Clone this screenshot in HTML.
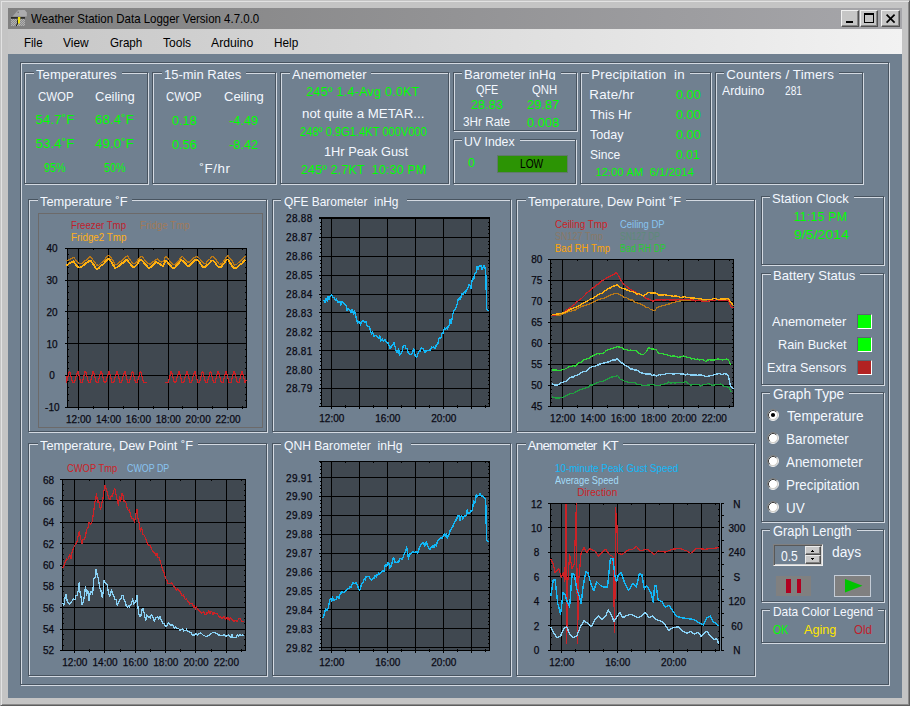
<!DOCTYPE html>
<html lang="en"><head><meta charset="utf-8"><title>Weather Station Data Logger Version 4.7.0.0</title>
<style>
html,body{margin:0;padding:0}
body{width:910px;height:706px;overflow:hidden;position:relative;background:#c4c4c4;font-family:"Liberation Sans", sans-serif;}
#win{position:absolute;left:0;top:0;width:910px;height:706px;box-sizing:border-box;border:1px solid #c4c4c4;border-right-color:#5e5e5e;border-bottom-color:#5e5e5e;box-shadow:inset 1px 1px 0 #e2e2e2, inset -1px -1px 0 #8a8a8a;background:#c4c4c4}
.gb{position:absolute;border:1px solid #485460;box-shadow:1px 1px 0 0 #d4dae2, inset 1px 1px 0 0 #d4dae2}
.gap{position:absolute;background:#708090}
.t{position:absolute;white-space:pre;line-height:1;transform-origin:0 50%}
.cb{position:absolute;width:18px;height:17px;box-sizing:border-box;background:#c6c6c6;border:1px solid #f0f0f0;border-right-color:#505050;border-bottom-color:#505050;box-shadow:inset -1px -1px 0 #868686}
.sq{position:absolute;width:15px;height:15px;box-sizing:border-box;border:1px solid #5a6672;border-right-color:#fff;border-bottom-color:#fff}
.rb{position:absolute;width:12px;height:12px;box-sizing:border-box;border-radius:50%;background:#fff;border:1px solid #606a74;border-right-color:#e8ecf0;border-bottom-color:#e8ecf0;box-shadow:inset 1px 1px 0 #30363c}
.rb i{position:absolute;left:3px;top:3px;width:4px;height:4px;border-radius:50%;background:#000}
.spin{position:absolute;box-sizing:border-box;border:1px solid #808080;border-right-color:#f0f0f0;border-bottom-color:#f0f0f0;box-shadow:inset 1px 1px 0 #585858, inset -1px -1px 0 #d0d0d0}
.sb{position:absolute;width:16px;height:9px;box-sizing:border-box;background:#c8c8c8;border:1px solid #ececec;border-right-color:#505050;border-bottom-color:#505050;box-shadow:inset -1px -1px 0 #808080}
</style></head>
<body>
<div id="win"></div>
<div style="position:absolute;left:8px;top:8px;width:894px;height:21px;background:linear-gradient(90deg,#808080,#a6a6aa);"></div>
<div style="position:absolute;left:8px;top:29px;width:894px;height:25px;background:linear-gradient(90deg,#c6c6c6,#f2f2f2);"></div>
<div style="position:absolute;left:8px;top:54px;width:894px;height:644px;background:#708090;"></div>
<svg style="position:absolute;left:0;top:0" width="40" height="32" viewBox="0 0 40 32">
<path d="M12.5 16.6 L17.6 10.4 L24.6 10 L26.6 12.5 L26.6 16.6 Z" fill="#a4a4a6"/>
<path d="M18 10.3 L24.6 10 L26.6 12.5 L26.6 16.2 L20 16.2 Z" fill="#acacae"/>
<defs><pattern id="dth" width="2" height="2" patternUnits="userSpaceOnUse"><rect width="2" height="2" fill="#8c8c8c"/><rect width="1" height="1" fill="#b0b0b0"/><rect x="1" y="1" width="1" height="1" fill="#b0b0b0"/></pattern></defs><rect x="11" y="19" width="14" height="7" fill="url(#dth)"/>
<rect x="11" y="17" width="14" height="1.7" fill="#2c2c2c"/>
<path d="M18 17 L20.4 17 L19.8 23.4 L17.7 23.4 Z" fill="#f4e610"/>
<path d="M17.2 19.6 L18 19.6 L17.9 24 L16.4 26.2 L15.6 26 L17 23.6 Z" fill="#181818"/>
<rect x="17.6" y="11.6" width="1.2" height="1.4" fill="#707070"/>
</svg>
<div class="cb" style="left:841px;top:10px"></div>
<div style="position:absolute;left:846px;top:21px;width:7px;height:2px;background:#000;"></div>
<div class="cb" style="left:860px;top:10px"></div>
<div style="position:absolute;left:864px;top:13px;width:8px;height:7px;border:1px solid #000;border-top:2px solid #000"></div>
<div class="cb" style="left:881px;top:10px;width:19px"></div>
<svg style="position:absolute;left:881px;top:10px" width="19" height="17"><path d="M5.6 4.6 L13.6 12.6 M13.6 4.6 L5.6 12.6" stroke="#000" stroke-width="1.7"/></svg>
<div class="gb" style="left:20px;top:62px;width:867px;height:621px"></div>
<div class="gb" style="left:24px;top:72px;width:122px;height:110px"></div>
<div class="gap" style="left:34.4px;top:72px;width:87.6px;height:2px"></div>
<div class="gb" style="left:152px;top:72px;width:122px;height:110px"></div>
<div class="gap" style="left:161.8px;top:72px;width:84.19999999999999px;height:2px"></div>
<div class="gb" style="left:280px;top:72px;width:167px;height:110px"></div>
<div class="gap" style="left:289.5px;top:72px;width:81.5px;height:2px"></div>
<div class="gb" style="left:453px;top:72px;width:122px;height:57px"></div>
<div class="gap" style="left:462.2px;top:72px;width:98.80000000000001px;height:2px"></div>
<div class="gb" style="left:453px;top:139px;width:121px;height:43px"></div>
<div class="gap" style="left:462.2px;top:139px;width:57.599999999999966px;height:2px"></div>
<div style="position:absolute;left:497px;top:155px;width:71px;height:18px;background:#2c9404;box-sizing:border-box;border:1px solid #5f7a6a"></div>
<div class="gb" style="left:580px;top:72px;width:129px;height:110px"></div>
<div class="gap" style="left:589.3px;top:72px;width:100.39999999999998px;height:2px"></div>
<div class="gb" style="left:715px;top:72px;width:146px;height:110px"></div>
<div class="gap" style="left:724.3px;top:72px;width:114.70000000000005px;height:2px"></div>
<div class="gb" style="left:761px;top:196px;width:121px;height:67px"></div>
<div class="gap" style="left:770.3px;top:196px;width:83.70000000000005px;height:2px"></div>
<div class="gb" style="left:761px;top:273px;width:121px;height:110px"></div>
<div class="gap" style="left:770.5px;top:273px;width:89.29999999999995px;height:2px"></div>
<div class="sq" style="left:857px;top:314px;background:#00ff00"></div>
<div class="sq" style="left:857px;top:337px;background:#00ff00"></div>
<div class="sq" style="left:857px;top:360px;background:#b22222"></div>
<div class="gb" style="left:761px;top:392px;width:121px;height:128px"></div>
<div class="gap" style="left:770px;top:392px;width:79px;height:2px"></div>
<svg style="position:absolute;left:765.2px;top:406.7px" width="16" height="16" viewBox="-8 -8 16 16"><circle r="5" fill="#fff"/><path d="M-3.89 3.89 A5.5 5.5 0 0 1 3.89 -3.89" stroke="#808080" stroke-width="1" fill="none"/><path d="M-3.89 3.89 A5.5 5.5 0 0 0 3.89 -3.89" stroke="#f4f4f4" stroke-width="1" fill="none"/><path d="M-3.18 3.18 A4.5 4.5 0 0 1 3.18 -3.18" stroke="#404040" stroke-width="1" fill="none"/><path d="M-3.18 3.18 A4.5 4.5 0 0 0 3.18 -3.18" stroke="#d4d0c8" stroke-width="1" fill="none"/><circle r="2.1" fill="#000"/></svg>
<svg style="position:absolute;left:765.2px;top:429.7px" width="16" height="16" viewBox="-8 -8 16 16"><circle r="5" fill="#fff"/><path d="M-3.89 3.89 A5.5 5.5 0 0 1 3.89 -3.89" stroke="#808080" stroke-width="1" fill="none"/><path d="M-3.89 3.89 A5.5 5.5 0 0 0 3.89 -3.89" stroke="#f4f4f4" stroke-width="1" fill="none"/><path d="M-3.18 3.18 A4.5 4.5 0 0 1 3.18 -3.18" stroke="#404040" stroke-width="1" fill="none"/><path d="M-3.18 3.18 A4.5 4.5 0 0 0 3.18 -3.18" stroke="#d4d0c8" stroke-width="1" fill="none"/></svg>
<svg style="position:absolute;left:765.2px;top:452.7px" width="16" height="16" viewBox="-8 -8 16 16"><circle r="5" fill="#fff"/><path d="M-3.89 3.89 A5.5 5.5 0 0 1 3.89 -3.89" stroke="#808080" stroke-width="1" fill="none"/><path d="M-3.89 3.89 A5.5 5.5 0 0 0 3.89 -3.89" stroke="#f4f4f4" stroke-width="1" fill="none"/><path d="M-3.18 3.18 A4.5 4.5 0 0 1 3.18 -3.18" stroke="#404040" stroke-width="1" fill="none"/><path d="M-3.18 3.18 A4.5 4.5 0 0 0 3.18 -3.18" stroke="#d4d0c8" stroke-width="1" fill="none"/></svg>
<svg style="position:absolute;left:765.2px;top:475.7px" width="16" height="16" viewBox="-8 -8 16 16"><circle r="5" fill="#fff"/><path d="M-3.89 3.89 A5.5 5.5 0 0 1 3.89 -3.89" stroke="#808080" stroke-width="1" fill="none"/><path d="M-3.89 3.89 A5.5 5.5 0 0 0 3.89 -3.89" stroke="#f4f4f4" stroke-width="1" fill="none"/><path d="M-3.18 3.18 A4.5 4.5 0 0 1 3.18 -3.18" stroke="#404040" stroke-width="1" fill="none"/><path d="M-3.18 3.18 A4.5 4.5 0 0 0 3.18 -3.18" stroke="#d4d0c8" stroke-width="1" fill="none"/></svg>
<svg style="position:absolute;left:765.2px;top:498.7px" width="16" height="16" viewBox="-8 -8 16 16"><circle r="5" fill="#fff"/><path d="M-3.89 3.89 A5.5 5.5 0 0 1 3.89 -3.89" stroke="#808080" stroke-width="1" fill="none"/><path d="M-3.89 3.89 A5.5 5.5 0 0 0 3.89 -3.89" stroke="#f4f4f4" stroke-width="1" fill="none"/><path d="M-3.18 3.18 A4.5 4.5 0 0 1 3.18 -3.18" stroke="#404040" stroke-width="1" fill="none"/><path d="M-3.18 3.18 A4.5 4.5 0 0 0 3.18 -3.18" stroke="#d4d0c8" stroke-width="1" fill="none"/></svg>
<div class="gb" style="left:761px;top:529px;width:121px;height:71px"></div>
<div class="gap" style="left:770px;top:529px;width:86.5px;height:2px"></div>
<div class="spin" style="left:773px;top:544px;width:50px;height:22px"></div>
<div class="sb" style="left:805px;top:546px"></div><div class="sb" style="left:805px;top:555px"></div>
<div style="position:absolute;left:812px;top:550px;width:1px;height:1px;background:#000;"></div>
<div style="position:absolute;left:811px;top:551px;width:3px;height:1px;background:#000;"></div>
<div style="position:absolute;left:811px;top:558px;width:3px;height:1px;background:#000;"></div>
<div style="position:absolute;left:812px;top:559px;width:1px;height:1px;background:#000;"></div>
<div style="position:absolute;left:776px;top:576px;width:35px;height:20px;background:#808080;"></div>
<div style="position:absolute;left:786px;top:579px;width:4.5px;height:14px;background:#b00020;"></div>
<div style="position:absolute;left:796.7px;top:579px;width:4.5px;height:14px;background:#b00020;"></div>
<div style="position:absolute;left:834px;top:575px;width:37px;height:22px;background:#808080;box-sizing:border-box;border:1px solid #c4ccd6"></div>
<svg style="position:absolute;left:834px;top:575px" width="37" height="22"><path d="M11 4 L28.5 10.8 L11 17.6 Z" fill="#00c400"/></svg>
<div class="gb" style="left:761px;top:609px;width:122px;height:32px"></div>
<div class="gap" style="left:770px;top:609px;width:108px;height:2px"></div>
<div class="gb" style="left:28px;top:199px;width:237px;height:231px"></div>
<div class="gap" style="left:37.5px;top:199px;width:94.5px;height:2px"></div>
<div style="position:absolute;left:38px;top:213px;width:223px;height:213px;border:1px solid #6c6a6a"></div>
<div class="gb" style="left:272px;top:199px;width:237px;height:231px"></div>
<div class="gap" style="left:281px;top:199px;width:126px;height:2px"></div>
<div class="gb" style="left:516px;top:199px;width:237px;height:231px"></div>
<div class="gap" style="left:525.8px;top:199px;width:160.0px;height:2px"></div>
<div class="gb" style="left:28px;top:443px;width:237px;height:231px"></div>
<div class="gap" style="left:38.2px;top:443px;width:160.0px;height:2px"></div>
<div class="gb" style="left:272px;top:443px;width:237px;height:231px"></div>
<div class="gap" style="left:281px;top:443px;width:130px;height:2px"></div>
<div class="gb" style="left:516px;top:443px;width:237px;height:231px"></div>
<div class="gap" style="left:525.6px;top:443px;width:97.39999999999998px;height:2px"></div>
<svg style="position:absolute;left:0;top:0" width="910" height="706" viewBox="0 0 910 706">
<rect x="67" y="248" width="180" height="160" fill="#404850"/>
<path d="M78.5 248 V410 M108.5 248 V410 M138.5 248 V410 M168.5 248 V410 M197.5 248 V410 M227.5 248 V410 M65 280.5 H247 M65 311.5 H247 M65 343.5 H247 M65 375.5 H247 M67.5 248 V408 M65 248.5 H247 M65 407.5 H247 M78.5 406 V409 M78.5 249 V250 M93.5 406 V409 M93.5 249 V250 M108.5 406 V409 M108.5 249 V250 M123.5 406 V409 M123.5 249 V250 M138.5 406 V409 M138.5 249 V250 M153.5 406 V409 M153.5 249 V250 M168.5 406 V409 M168.5 249 V250 M182.5 406 V409 M182.5 249 V250 M197.5 406 V409 M197.5 249 V250 M212.5 406 V409 M212.5 249 V250 M227.5 406 V409 M227.5 249 V250 M242.5 406 V409 M242.5 249 V250 M68 248.5 H69 M68 254.5 H69 M68 261.5 H69 M68 267.5 H69 M68 273.5 H69 M68 280.5 H69 M68 286.5 H69 M68 292.5 H69 M68 299.5 H69 M68 305.5 H69 M68 311.5 H69 M68 318.5 H69 M68 324.5 H69 M68 330.5 H69 M68 337.5 H69 M68 343.5 H69 M68 349.5 H69 M68 356.5 H69 M68 362.5 H69 M68 368.5 H69 M68 375.5 H69 M68 381.5 H69 M68 387.5 H69 M68 394.5 H69 M68 400.5 H69 M246.5 248 V408 M245 248.5 H246 M245 254.5 H246 M245 261.5 H246 M245 267.5 H246 M245 273.5 H246 M245 280.5 H246 M245 286.5 H246 M245 292.5 H246 M245 299.5 H246 M245 305.5 H246 M245 311.5 H246 M245 318.5 H246 M245 324.5 H246 M245 330.5 H246 M245 337.5 H246 M245 343.5 H246 M245 349.5 H246 M245 356.5 H246 M245 362.5 H246 M245 368.5 H246 M245 375.5 H246 M245 381.5 H246 M245 387.5 H246 M245 394.5 H246 M245 400.5 H246" stroke="#000" stroke-width="1" fill="none" shape-rendering="crispEdges"/>
<polyline points="66.5,261.0 68.6,260.2 70.6,258.9 72.7,257.7 73.9,257.4 76.4,261.1 78.9,263.9 80.9,263.6 83.1,262.5 85.3,260.7 87.6,259.2 89.8,257.0 91.0,257.1 93.8,261.2 96.7,264.9 98.7,265.4 101.1,262.9 103.5,261.1 106.0,257.9 108.4,255.3 109.6,255.6 112.4,259.8 115.3,264.6 117.3,264.0 119.5,262.3 121.8,260.7 124.0,258.7 126.2,256.6 127.4,256.0 130.3,260.1 133.2,263.5 135.2,263.6 137.9,260.0 140.5,257.0 141.7,256.4 144.1,259.1 146.5,261.9 148.9,263.9 150.9,264.0 153.5,261.4 156.1,259.8 157.3,258.9 159.3,260.6 161.3,262.1 163.3,261.6 165.5,256.7 166.7,257.3 168.7,259.5 170.8,262.5 172.8,264.4 174.8,264.5 177.0,262.6 179.1,260.2 181.3,256.7 182.5,256.5 185.2,259.4 187.8,262.2 189.8,261.8 191.9,260.0 194.1,257.8 196.2,256.5 197.4,256.5 199.5,258.5 201.5,260.7 203.6,263.4 205.6,263.8 207.8,260.7 209.9,259.1 212.1,256.6 213.3,256.7 215.3,259.0 217.4,261.6 219.4,264.5 221.4,263.9 224.2,260.5 227.0,256.3 228.2,255.9 230.2,259.2 232.3,261.1 234.3,264.9 236.3,264.8 238.5,262.4 240.6,261.1 242.8,258.9 244.9,256.3 246.1,257.0" fill="none" stroke="#b87818" stroke-width="1.3" stroke-linejoin="round" shape-rendering="crispEdges"/>
<polyline points="66.5,265.7 69.4,263.1 72.4,261.7 73.6,261.4 76.1,264.9 78.6,267.5 80.6,267.6 82.8,265.8 85.0,264.0 87.3,262.3 89.5,260.7 90.7,260.6 93.6,264.6 96.4,269.1 98.4,268.6 100.8,265.6 103.2,264.3 105.7,261.3 108.1,258.8 109.3,258.9 112.2,263.4 115.0,267.9 117.0,267.4 119.2,265.9 121.4,263.5 123.7,262.5 125.9,259.8 127.1,259.9 130.0,263.6 132.9,267.2 134.9,266.8 137.6,263.7 140.2,259.4 141.4,259.9 143.8,262.5 146.2,265.1 148.6,268.3 150.6,267.4 153.2,265.1 155.8,262.0 157.0,262.5 159.0,263.5 161.0,265.0 163.0,266.0 165.2,261.0 166.4,260.6 168.4,263.2 170.5,265.4 172.5,268.1 174.5,268.4 176.7,265.1 178.8,263.3 181.0,260.2 182.2,260.6 184.8,262.7 187.5,266.0 189.5,265.6 191.6,263.3 193.8,261.1 195.9,259.6 197.1,259.6 199.2,261.9 201.2,264.8 203.3,267.6 205.3,267.0 207.5,264.7 209.6,262.9 211.8,260.4 213.0,260.5 215.0,262.6 217.1,265.6 219.1,267.5 221.1,267.0 223.9,263.6 226.7,259.7 227.9,259.4 229.9,262.6 232.0,265.8 234.0,267.8 236.0,268.2 238.2,266.3 240.3,264.5 242.5,262.9 244.6,260.4 245.8,260.6" fill="none" stroke="#ffb010" stroke-width="1.8" stroke-linejoin="round" shape-rendering="crispEdges"/>
<polyline points="66.6,376.5 66.4,382.5 69.3,371.6 69.9,371.6 72.6,382.5 74.5,382.5 77.4,371.6 78.0,371.6 80.7,382.5 82.2,382.5 85.1,371.6 85.7,371.6 88.4,382.5 90.1,382.5 93.0,371.6 93.6,371.6 96.3,382.5 98.0,382.5 100.9,371.6 101.5,371.6 104.2,382.5 105.8,382.5 108.7,371.6 109.3,371.6 112.0,382.5 113.8,382.5 116.7,371.6 117.3,371.6 120.0,382.5 121.5,382.5 124.4,371.6 125.0,371.6 127.7,382.5 129.3,382.5 132.2,371.6 132.8,371.6 135.5,382.5 137.3,382.5 140.2,371.6 140.8,371.6 143.5,382.5 147.0,382.5" fill="none" stroke="#cc2226" stroke-width="1.2" stroke-linejoin="round" shape-rendering="crispEdges"/>
<polyline points="165.0,382.5 168.1,382.5 171.0,371.6 171.6,371.6 174.3,382.5 175.8,382.5 178.7,371.6 179.3,371.6 182.0,382.5 183.8,382.5 186.7,371.6 187.3,371.6 190.0,382.5 191.5,382.5 194.4,371.6 195.0,371.6 197.7,382.5 199.4,382.5 202.3,371.6 202.9,371.6 205.6,382.5 207.3,382.5 210.2,371.6 210.8,371.6 213.5,382.5 215.0,382.5 217.9,371.6 218.5,371.6 221.2,382.5 222.9,382.5 225.8,371.6 226.4,371.6 229.1,382.5 231.0,382.5 233.9,371.6 234.5,371.6 237.2,382.5 238.9,382.5 241.8,371.6 242.4,371.6 245.1,382.5 246.3,380.0" fill="none" stroke="#cc2226" stroke-width="1.2" stroke-linejoin="round" shape-rendering="crispEdges"/>
<rect x="321" y="217" width="169" height="190" fill="#404850"/>
<path d="M331.5 217 V409 M359.5 217 V409 M387.5 217 V409 M415.5 217 V409 M443.5 217 V409 M471.5 217 V409 M319 218.5 H490 M319 237.5 H490 M319 256.5 H490 M319 275.5 H490 M319 294.5 H490 M319 312.5 H490 M319 331.5 H490 M319 350.5 H490 M319 369.5 H490 M319 388.5 H490 M321.5 217 V407 M319 217.5 H490 M319 406.5 H490 M331.5 405 V408 M331.5 218 V219 M345.5 405 V408 M345.5 218 V219 M359.5 405 V408 M359.5 218 V219 M373.5 405 V408 M373.5 218 V219 M387.5 405 V408 M387.5 218 V219 M401.5 405 V408 M401.5 218 V219 M415.5 405 V408 M415.5 218 V219 M429.5 405 V408 M429.5 218 V219 M443.5 405 V408 M443.5 218 V219 M457.5 405 V408 M457.5 218 V219 M471.5 405 V408 M471.5 218 V219 M485.5 405 V408 M485.5 218 V219 M320 218.5 H321 M320 222.5 H321 M320 226.5 H321 M320 229.5 H321 M320 233.5 H321 M320 237.5 H321 M320 241.5 H321 M320 244.5 H321 M320 248.5 H321 M320 252.5 H321 M320 256.5 H321 M320 260.5 H321 M320 263.5 H321 M320 267.5 H321 M320 271.5 H321 M320 275.5 H321 M320 278.5 H321 M320 282.5 H321 M320 286.5 H321 M320 290.5 H321 M320 294.5 H321 M320 297.5 H321 M320 301.5 H321 M320 305.5 H321 M320 309.5 H321 M320 312.5 H321 M320 316.5 H321 M320 320.5 H321 M320 324.5 H321 M320 327.5 H321 M320 331.5 H321 M320 335.5 H321 M320 339.5 H321 M320 343.5 H321 M320 346.5 H321 M320 350.5 H321 M320 354.5 H321 M320 358.5 H321 M320 361.5 H321 M320 365.5 H321 M320 369.5 H321 M320 373.5 H321 M320 377.5 H321 M320 380.5 H321 M320 384.5 H321 M320 388.5 H321 M320 392.5 H321 M320 395.5 H321 M320 399.5 H321 M320 403.5 H321 M489.5 217 V407 M488 218.5 H489 M488 222.5 H489 M488 226.5 H489 M488 229.5 H489 M488 233.5 H489 M488 237.5 H489 M488 241.5 H489 M488 244.5 H489 M488 248.5 H489 M488 252.5 H489 M488 256.5 H489 M488 260.5 H489 M488 263.5 H489 M488 267.5 H489 M488 271.5 H489 M488 275.5 H489 M488 278.5 H489 M488 282.5 H489 M488 286.5 H489 M488 290.5 H489 M488 294.5 H489 M488 297.5 H489 M488 301.5 H489 M488 305.5 H489 M488 309.5 H489 M488 312.5 H489 M488 316.5 H489 M488 320.5 H489 M488 324.5 H489 M488 327.5 H489 M488 331.5 H489 M488 335.5 H489 M488 339.5 H489 M488 343.5 H489 M488 346.5 H489 M488 350.5 H489 M488 354.5 H489 M488 358.5 H489 M488 361.5 H489 M488 365.5 H489 M488 369.5 H489 M488 373.5 H489 M488 377.5 H489 M488 380.5 H489 M488 384.5 H489 M488 388.5 H489 M488 392.5 H489 M488 395.5 H489 M488 399.5 H489 M488 403.5 H489" stroke="#000" stroke-width="1" fill="none" shape-rendering="crispEdges"/>
<polyline points="322.8,300.6 323.9,300.4 324.9,302.8 326.0,298.1 327.1,301.1 328.0,296.1 328.9,299.3 329.8,296.2 330.7,296.1 331.7,294.6 332.6,297.3 333.5,297.5 334.5,298.2 335.4,300.8 336.3,298.9 337.2,300.5 338.1,302.3 339.0,301.6 339.9,301.1 340.8,305.2 341.7,302.2 342.6,301.5 343.5,303.6 344.5,303.6 345.4,304.9 346.3,305.9 347.2,310.5 348.1,308.5 349.0,309.1 349.9,310.2 350.8,312.6 351.7,309.6 352.6,309.4 353.5,314.4 354.5,310.9 355.5,314.9 356.5,318.9 357.6,323.7 358.6,321.3 359.6,321.5 360.5,324.9 361.4,322.0 362.3,321.0 363.2,321.1 364.2,321.5 365.1,322.3 366.0,321.9 367.0,325.3 367.9,326.3 368.8,326.3 369.7,327.9 370.6,331.9 371.5,333.8 372.4,332.1 373.3,333.6 374.2,336.4 375.1,335.3 376.1,335.6 377.0,337.0 377.9,337.2 378.8,337.9 379.7,335.6 380.6,341.7 381.5,340.0 382.4,339.0 383.3,341.6 384.2,340.5 385.2,339.9 386.1,341.3 387.1,343.0 388.1,342.4 389.2,345.9 390.3,348.8 391.4,346.0 392.3,344.6 393.2,344.3 394.1,342.4 395.0,346.4 395.9,350.5 396.8,352.0 397.7,351.9 398.6,348.8 399.5,355.8 400.4,353.8 401.3,352.9 402.2,351.3 403.1,346.7 404.0,346.0 404.9,345.1 405.8,348.6 407.1,348.6 408.4,353.7 409.3,353.5 410.2,354.5 411.1,354.2 412.0,353.7 412.9,351.2 413.8,349.0 414.9,355.0 416.0,356.9 417.0,356.9 418.1,353.3 419.2,351.0 420.3,351.0 421.2,347.9 422.1,348.5 423.0,348.4 423.9,350.1 424.8,352.6 425.7,350.5 426.6,351.4 427.6,350.4 428.5,350.8 429.5,350.1 430.4,350.7 431.5,346.6 432.6,347.5 433.7,346.5 434.7,348.8 435.8,346.3 436.9,344.7 438.0,343.1 439.1,338.0 440.0,338.4 440.9,338.1 441.9,333.5 442.8,333.5 443.8,329.9 444.7,327.4 445.6,329.6 446.5,327.9 447.4,328.9 448.3,326.0 449.2,325.1 450.1,319.3 451.0,323.6 451.9,319.8 452.8,314.5 453.7,310.9 454.6,309.6 455.5,308.6 456.4,306.3 457.3,304.2 458.2,298.7 459.1,298.0 460.0,299.7 460.9,297.4 461.8,294.1 462.7,294.5 463.6,293.0 464.5,291.8 465.4,293.3 466.3,289.4 467.2,289.6 468.1,287.6 469.0,284.4 469.9,285.0 470.9,288.9 471.8,281.6 472.7,278.6 473.6,279.5 474.5,275.2 475.4,272.4 476.3,272.1 477.2,266.6 478.1,269.4 479.1,266.5 480.0,265.4 481.0,265.7 482.0,269.2 483.1,267.7 484.2,265.5 485.3,268.8 485.7,270.2 486.2,289.7 486.7,309.6 488.9,310.7" fill="none" stroke="#12b8f8" stroke-width="1.4" stroke-linejoin="round" shape-rendering="crispEdges"/>
<rect x="550" y="259" width="184" height="148" fill="#404850"/>
<path d="M562.5 259 V409 M592.5 259 V409 M623.5 259 V409 M653.5 259 V409 M683.5 259 V409 M714.5 259 V409 M548 280.5 H734 M548 301.5 H734 M548 322.5 H734 M548 343.5 H734 M548 364.5 H734 M548 385.5 H734 M550.5 259 V407 M548 259.5 H734 M548 406.5 H734 M562.5 405 V408 M562.5 260 V261 M577.5 405 V408 M577.5 260 V261 M592.5 405 V408 M592.5 260 V261 M607.5 405 V408 M607.5 260 V261 M623.5 405 V408 M623.5 260 V261 M638.5 405 V408 M638.5 260 V261 M653.5 405 V408 M653.5 260 V261 M668.5 405 V408 M668.5 260 V261 M683.5 405 V408 M683.5 260 V261 M698.5 405 V408 M698.5 260 V261 M714.5 405 V408 M714.5 260 V261 M729.5 405 V408 M729.5 260 V261 M551 259.5 H552 M551 263.5 H552 M551 267.5 H552 M551 272.5 H552 M551 276.5 H552 M551 280.5 H552 M551 284.5 H552 M551 288.5 H552 M551 293.5 H552 M551 297.5 H552 M551 301.5 H552 M551 305.5 H552 M551 309.5 H552 M551 314.5 H552 M551 318.5 H552 M551 322.5 H552 M551 326.5 H552 M551 330.5 H552 M551 335.5 H552 M551 339.5 H552 M551 343.5 H552 M551 347.5 H552 M551 351.5 H552 M551 356.5 H552 M551 360.5 H552 M551 364.5 H552 M551 368.5 H552 M551 372.5 H552 M551 377.5 H552 M551 381.5 H552 M551 385.5 H552 M551 389.5 H552 M551 393.5 H552 M551 398.5 H552 M551 402.5 H552 M733.5 259 V407 M732 259.5 H733 M732 263.5 H733 M732 267.5 H733 M732 272.5 H733 M732 276.5 H733 M732 280.5 H733 M732 284.5 H733 M732 288.5 H733 M732 293.5 H733 M732 297.5 H733 M732 301.5 H733 M732 305.5 H733 M732 309.5 H733 M732 314.5 H733 M732 318.5 H733 M732 322.5 H733 M732 326.5 H733 M732 330.5 H733 M732 335.5 H733 M732 339.5 H733 M732 343.5 H733 M732 347.5 H733 M732 351.5 H733 M732 356.5 H733 M732 360.5 H733 M732 364.5 H733 M732 368.5 H733 M732 372.5 H733 M732 377.5 H733 M732 381.5 H733 M732 385.5 H733 M732 389.5 H733 M732 393.5 H733 M732 398.5 H733 M732 402.5 H733" stroke="#000" stroke-width="1" fill="none" shape-rendering="crispEdges"/>
<polyline points="551.7,316.1 553.8,315.1 556.0,315.1 558.1,315.0 560.3,315.0 562.4,314.3 564.6,313.0 566.7,312.8 568.8,311.5 570.9,311.4 573.1,310.2 575.2,310.0 577.4,308.5 579.6,307.4 581.8,306.3 584.0,305.8 586.2,305.1 588.4,304.5 590.6,303.3 592.8,302.1 595.0,301.6 597.3,300.0 599.6,299.7 601.8,298.4 604.1,298.1 606.4,297.0 608.9,295.9 611.3,294.5 613.8,294.1 616.3,293.1 619.1,294.3 622.0,295.7 624.1,297.2 626.2,297.6 628.3,298.8 630.5,300.0 632.6,300.1 634.7,302.0 637.0,302.9 639.3,303.6 641.5,304.6 643.8,305.7 646.1,307.5 648.2,307.3 650.3,309.3 652.4,310.0 654.6,310.7 657.4,307.3 659.7,306.6 661.9,305.9 664.2,305.5 666.5,304.3 668.7,304.1 670.8,303.5 672.8,302.6 674.8,302.4 676.8,301.5 678.9,301.2 680.9,300.8 682.9,300.7 685.0,300.1 687.2,300.1 689.3,300.2 691.4,300.1 693.5,299.9 695.7,300.8 697.8,300.1 699.9,300.1 702.0,300.1 704.2,300.5 706.3,301.1 708.4,301.2 710.6,300.6 712.8,300.3 715.0,300.1 717.2,299.7 719.4,300.1 721.6,299.8 723.8,300.3 726.0,299.5 728.3,299.2 731.1,303.2 733.4,305.8" fill="none" stroke="#b87818" stroke-width="1.25" stroke-linejoin="round" shape-rendering="crispEdges"/>
<polyline points="551.7,315.9 553.8,315.6 556.0,314.8 558.1,314.2 560.3,313.4 562.4,313.1 564.6,311.9 566.7,310.1 568.8,308.8 570.9,307.0 573.1,305.5 575.2,303.8 577.4,301.3 579.6,300.1 581.8,298.1 584.0,296.1 586.2,293.5 588.4,291.6 590.6,289.9 592.8,288.0 594.9,286.6 597.1,284.8 599.2,283.2 601.4,281.2 603.5,279.8 605.7,278.6 607.8,277.1 609.9,276.7 612.0,275.1 614.2,274.1 616.3,272.4 619.1,276.6 622.5,283.0 624.9,284.9 627.2,287.0 629.5,288.7 631.9,290.3 634.1,291.2 636.4,292.5 638.7,294.1 641.0,294.5 643.2,295.9 646.1,298.8 648.4,299.0 650.8,300.2 653.1,301.3 655.3,299.9 657.4,300.0 659.4,300.0 661.4,299.8 663.4,300.1 665.4,299.9 667.4,299.4 669.4,300.1 671.4,300.0 673.4,300.0 675.4,300.1 677.5,299.8 679.5,299.6 681.5,299.2 683.5,299.7 685.5,299.5 687.6,299.8 689.7,299.7 691.8,300.0 693.9,300.3 695.9,301.0 698.0,300.2 700.1,300.6 702.2,301.3 704.3,301.8 706.3,301.8 708.4,301.2 711.2,300.2 714.1,300.2 716.1,299.9 718.1,299.8 720.2,300.4 722.2,300.4 724.2,300.1 726.2,300.2 728.3,300.2 731.1,307.1 733.4,308.0" fill="none" stroke="#cc2226" stroke-width="1.25" stroke-linejoin="round" shape-rendering="crispEdges"/>
<polyline points="551.7,314.4 553.8,314.8 556.0,314.1 558.1,313.9 560.3,313.6 562.4,313.2 564.6,312.4 566.7,311.2 568.8,310.1 570.9,309.1 573.1,308.1 575.2,307.6 577.4,306.5 579.6,305.7 581.8,304.1 584.0,302.9 586.2,301.8 588.4,300.5 590.6,298.7 592.8,298.5 595.0,296.6 597.3,295.4 599.6,293.8 601.8,293.2 604.1,291.4 606.4,289.8 608.5,288.3 610.7,287.9 612.8,286.3 615.0,285.9 617.1,284.1 620.5,287.6 622.6,288.6 624.6,288.8 626.6,289.8 628.6,290.5 630.7,291.4 632.7,291.6 634.7,292.7 636.8,294.0 639.0,293.7 641.1,294.8 643.2,296.0 646.1,294.1 648.9,292.3 651.3,293.2 653.6,293.1 656.0,293.1 658.8,295.1 660.9,295.2 663.1,294.9 665.2,294.6 667.3,295.7 669.4,295.4 671.6,296.0 673.7,296.3 675.8,295.9 677.9,296.4 680.1,297.3 682.1,297.2 684.1,296.6 686.1,297.3 688.2,297.5 690.2,297.9 692.2,298.2 694.2,298.1 696.3,298.3 698.3,298.8 700.3,298.3 702.3,299.3 704.4,299.3 706.4,299.2 708.4,299.4 710.6,299.5 712.8,298.9 715.0,298.5 717.2,299.3 719.4,299.5 721.6,298.9 723.8,298.9 726.0,298.8 728.3,298.4 731.1,303.1 733.4,304.3" fill="none" stroke="#ffb010" stroke-width="1.4" stroke-linejoin="round" shape-rendering="crispEdges"/>
<polyline points="551.7,396.8 553.8,397.4 556.0,398.0 558.1,398.1 560.3,397.9 562.4,397.3 564.6,396.6 566.7,395.5 568.8,394.1 570.9,393.7 573.1,393.5 575.2,392.3 577.4,391.2 579.6,389.9 581.8,389.5 584.0,388.4 586.2,387.8 588.4,387.1 590.6,384.9 592.8,385.1 595.0,383.5 597.3,382.8 599.6,381.7 601.8,381.9 604.1,380.7 606.4,379.7 608.6,378.3 610.9,377.2 613.2,376.9 615.4,376.4 617.7,375.5 620.5,379.8 622.6,379.8 624.6,381.4 626.6,381.4 628.6,382.6 630.7,382.2 632.7,382.5 634.7,382.7 636.8,384.1 639.0,384.8 641.1,384.9 643.2,385.6 645.2,385.2 647.3,385.1 649.3,385.1 651.3,384.3 653.3,384.7 655.4,385.2 657.4,385.2 659.7,385.3 661.9,384.6 664.2,384.1 666.5,383.6 668.7,382.0 670.9,383.1 673.0,382.6 675.1,383.2 677.2,382.7 679.4,382.6 681.5,382.4 683.6,382.5 685.7,381.6 688.6,383.8 690.6,385.2 692.6,384.8 694.6,384.3 696.6,384.4 698.6,384.4 700.6,385.9 702.6,384.8 704.6,384.6 706.6,384.2 708.6,383.4 710.6,384.6 712.6,385.2 714.6,385.0 716.6,384.7 718.6,384.3 720.6,384.0 722.6,384.6 724.0,386.6 726.8,386.5 729.7,388.2 731.1,392.2" fill="none" stroke="#20a040" stroke-width="1.25" stroke-linejoin="round" shape-rendering="crispEdges"/>
<polyline points="551.7,369.8 553.8,370.1 556.0,370.0 558.1,370.2 560.3,370.8 562.4,369.4 564.6,369.2 566.7,368.2 568.8,367.0 570.9,366.5 573.1,365.7 575.2,366.2 577.4,363.8 579.6,362.6 581.8,362.0 584.0,359.8 586.2,359.0 588.4,358.7 590.6,357.0 592.8,355.6 595.0,354.9 597.3,353.5 599.6,354.1 601.8,353.2 604.1,353.0 606.4,350.4 608.6,349.6 610.9,348.7 613.2,348.3 615.4,347.2 617.7,346.8 619.8,347.2 622.0,347.7 624.1,349.9 626.2,349.1 628.3,350.5 630.5,350.1 632.6,350.8 634.7,350.1 636.8,351.4 639.0,353.2 641.1,354.2 643.2,354.7 646.1,351.8 648.9,347.5 651.3,349.1 653.6,349.1 656.0,349.4 658.8,353.6 660.9,353.6 663.1,353.8 665.2,354.6 667.3,355.0 669.4,355.6 671.6,356.3 673.9,355.9 676.3,356.8 678.7,357.2 681.1,356.8 683.5,356.0 685.5,356.3 687.5,357.4 689.5,357.5 691.5,358.9 693.5,358.7 695.5,359.3 697.5,359.1 699.5,360.0 701.6,359.7 703.6,360.0 705.6,361.4 707.7,360.1 709.8,359.8 712.0,360.1 714.1,360.0 716.1,359.2 718.1,359.0 720.2,359.7 722.2,359.9 724.2,359.8 726.2,359.0 728.3,359.3 730.5,364.7" fill="none" stroke="#30d838" stroke-width="1.25" stroke-linejoin="round" shape-rendering="crispEdges"/>
<polyline points="551.7,383.3 553.8,384.6 556.0,385.3 558.2,384.8 560.3,383.1 562.4,382.5 564.6,381.7 566.7,380.9 568.8,378.3 570.9,377.1 573.1,377.1 575.2,375.8 577.4,375.3 579.6,374.0 581.8,372.2 584.0,371.1 586.2,371.7 588.4,368.9 590.6,367.6 592.8,366.3 595.0,366.2 597.3,365.4 599.6,364.2 601.8,363.5 604.1,362.9 606.4,362.3 608.5,362.1 610.7,361.1 612.8,359.4 615.0,360.5 617.1,358.8 619.6,361.6 622.0,363.0 624.1,364.9 626.2,365.4 628.3,367.0 630.5,369.4 632.6,368.8 634.7,370.3 636.8,369.9 639.0,371.3 641.1,372.8 643.2,373.2 645.5,373.9 647.8,374.2 650.0,374.0 652.3,375.4 654.6,375.0 656.6,376.3 658.6,374.5 660.6,374.9 662.7,374.2 664.7,374.4 666.7,373.2 668.7,373.8 670.8,373.2 672.9,374.1 675.0,373.8 677.2,373.6 679.3,373.2 681.4,374.2 683.5,374.1 685.5,375.0 687.5,374.0 689.5,374.7 691.5,374.9 693.5,375.0 695.5,375.1 697.5,375.3 699.5,375.1 701.6,375.0 703.6,375.6 705.6,376.4 707.6,376.6 709.6,375.8 711.7,375.5 713.7,374.9 715.7,374.4 717.7,373.7 719.8,373.7 721.9,374.6 724.0,373.7 726.1,373.9 728.3,375.8 730.5,386.1 733.4,388.8" fill="none" stroke="#8ad2f6" stroke-width="1.4" stroke-linejoin="round" shape-rendering="crispEdges"/>
<rect x="62" y="479" width="184" height="172" fill="#404850"/>
<path d="M74.5 479 V653 M104.5 479 V653 M135.5 479 V653 M165.5 479 V653 M195.5 479 V653 M226.5 479 V653 M60 500.5 H246 M60 522.5 H246 M60 543.5 H246 M60 565.5 H246 M60 586.5 H246 M60 607.5 H246 M60 629.5 H246 M62.5 479 V651 M60 479.5 H246 M60 650.5 H246 M74.5 649 V652 M74.5 480 V481 M89.5 649 V652 M89.5 480 V481 M104.5 649 V652 M104.5 480 V481 M120.5 649 V652 M120.5 480 V481 M135.5 649 V652 M135.5 480 V481 M150.5 649 V652 M150.5 480 V481 M165.5 649 V652 M165.5 480 V481 M180.5 649 V652 M180.5 480 V481 M195.5 649 V652 M195.5 480 V481 M211.5 649 V652 M211.5 480 V481 M226.5 649 V652 M226.5 480 V481 M241.5 649 V652 M241.5 480 V481 M63 479.5 H64 M63 484.5 H64 M63 490.5 H64 M63 495.5 H64 M63 500.5 H64 M63 506.5 H64 M63 511.5 H64 M63 516.5 H64 M63 522.5 H64 M63 527.5 H64 M63 532.5 H64 M63 538.5 H64 M63 543.5 H64 M63 548.5 H64 M63 554.5 H64 M63 559.5 H64 M63 565.5 H64 M63 570.5 H64 M63 575.5 H64 M63 581.5 H64 M63 586.5 H64 M63 591.5 H64 M63 597.5 H64 M63 602.5 H64 M63 607.5 H64 M63 613.5 H64 M63 618.5 H64 M63 623.5 H64 M63 629.5 H64 M63 634.5 H64 M63 639.5 H64 M63 645.5 H64 M245.5 479 V651 M244 479.5 H245 M244 484.5 H245 M244 490.5 H245 M244 495.5 H245 M244 500.5 H245 M244 506.5 H245 M244 511.5 H245 M244 516.5 H245 M244 522.5 H245 M244 527.5 H245 M244 532.5 H245 M244 538.5 H245 M244 543.5 H245 M244 548.5 H245 M244 554.5 H245 M244 559.5 H245 M244 565.5 H245 M244 570.5 H245 M244 575.5 H245 M244 581.5 H245 M244 586.5 H245 M244 591.5 H245 M244 597.5 H245 M244 602.5 H245 M244 607.5 H245 M244 613.5 H245 M244 618.5 H245 M244 623.5 H245 M244 629.5 H245 M244 634.5 H245 M244 639.5 H245 M244 645.5 H245" stroke="#000" stroke-width="1" fill="none" shape-rendering="crispEdges"/>
<polyline points="62.5,568.5 64.3,565.1 65.4,561.6 66.6,558.8 67.8,559.6 68.9,556.6 69.9,554.8 71.0,558.3 72.1,552.1 73.1,549.4 74.5,545.6 75.9,543.9 77.0,541.2 78.1,536.3 79.1,531.7 80.6,538.5 82.0,543.6 83.1,539.5 84.3,539.2 85.5,536.0 86.7,529.2 87.9,528.1 89.1,522.3 90.8,524.5 92.2,521.8 93.7,511.5 95.1,500.7 96.5,493.7 97.5,502.6 98.6,500.4 99.7,506.1 100.7,509.4 101.8,503.9 102.9,498.7 103.9,491.0 105.0,485.7 106.2,489.4 107.3,491.9 108.5,497.4 109.9,500.0 111.4,495.4 112.5,496.3 113.7,490.5 114.9,488.8 116.1,495.1 117.3,501.2 118.4,505.3 119.6,496.3 120.8,501.1 122.0,493.3 123.0,495.5 124.1,501.6 125.2,501.8 126.2,503.1 127.3,509.1 128.4,510.7 129.4,509.7 130.5,515.2 131.9,518.2 133.3,519.0 134.5,522.1 135.7,515.5 136.9,509.0 138.0,518.5 139.2,523.7 140.4,531.4 141.6,527.4 142.8,534.0 143.9,534.9 145.1,537.3 146.3,540.1 147.5,544.6 148.5,545.0 149.6,545.5 150.7,546.1 151.7,549.7 152.8,551.3 153.9,552.1 154.9,553.4 156.0,555.4 157.0,553.8 158.1,557.8 159.3,557.6 160.5,562.5 161.6,565.6 162.7,569.9 163.8,571.3 164.8,575.6 165.9,578.7 167.0,580.3 168.0,583.3 169.1,583.0 170.1,583.4 171.2,582.9 172.3,584.0 173.3,585.2 174.3,587.3 175.3,587.4 176.3,590.4 177.3,588.8 178.3,589.9 179.3,591.1 180.4,591.7 181.4,595.1 182.4,595.5 183.4,595.1 184.4,597.6 185.4,599.8 186.4,598.7 187.4,600.9 188.5,601.3 189.5,604.4 190.5,603.4 191.5,603.4 192.5,604.1 193.5,607.1 194.5,605.9 195.5,609.4 196.5,606.9 197.6,609.2 198.6,610.2 199.6,610.8 200.6,612.2 201.7,613.3 202.7,612.2 203.8,611.7 204.8,614.5 205.9,614.8 206.9,612.7 207.9,613.4 208.9,610.7 210.0,613.8 211.0,611.5 212.0,612.1 213.0,614.4 214.0,612.0 215.0,613.9 216.0,613.7 217.0,613.8 218.0,615.1 219.1,617.2 220.1,616.5 221.1,617.2 222.1,618.4 223.1,617.6 224.1,616.5 225.1,619.1 226.1,617.8 227.2,619.0 228.2,617.3 229.2,620.3 230.2,618.0 231.2,618.2 232.2,619.9 233.2,620.4 234.2,621.5 235.3,620.4 236.4,621.1 237.4,621.4 238.5,619.2 239.5,618.2 240.7,619.6 241.8,621.1 243.0,621.6 244.2,621.2" fill="none" stroke="#cc2226" stroke-width="1.2" stroke-linejoin="round" shape-rendering="crispEdges"/>
<polyline points="62.5,602.6 63.7,605.6 64.9,598.4 66.0,594.6 67.2,601.2 68.4,603.4 69.6,603.9 70.6,603.7 71.7,601.5 72.8,599.7 73.8,598.8 74.9,599.6 75.9,595.7 77.0,595.5 78.1,591.2 79.1,582.8 80.1,593.2 81.0,596.6 82.0,604.9 83.1,602.4 84.3,596.4 85.5,586.7 86.7,594.9 87.9,590.8 89.1,600.8 90.2,592.6 91.4,591.5 92.6,594.4 93.8,579.1 95.0,577.9 96.1,569.1 97.3,575.3 98.5,579.3 99.7,587.9 100.9,590.6 102.2,597.6 103.1,592.5 104.0,580.4 105.0,582.7 106.2,583.7 107.3,585.3 108.5,593.2 109.5,596.1 110.4,595.2 111.4,589.6 112.5,593.5 113.7,595.6 114.9,599.5 116.1,599.3 117.3,605.2 118.4,603.2 119.6,599.5 120.8,599.1 122.0,595.1 123.0,595.7 124.1,600.1 125.2,601.7 126.2,605.8 127.3,607.2 128.4,605.9 129.4,607.1 130.5,604.2 131.5,604.1 132.6,598.3 133.7,604.5 134.7,602.5 135.8,602.7 136.9,595.3 137.8,606.1 138.7,613.0 139.7,616.7 140.9,615.7 142.2,609.1 143.3,608.8 144.5,615.0 145.7,620.5 146.9,614.8 148.1,617.0 149.2,616.7 150.3,618.2 151.4,614.3 152.4,615.9 153.5,618.9 154.6,621.5 155.6,617.2 156.7,617.5 157.7,616.4 158.8,619.3 159.9,616.3 160.9,619.6 162.0,621.3 163.1,623.6 164.1,624.0 165.2,625.5 166.2,626.6 167.3,625.4 168.4,622.6 169.4,623.5 170.5,624.9 171.5,624.9 172.5,625.1 173.5,626.2 174.5,628.6 175.6,627.1 176.6,628.2 177.6,628.8 178.6,628.4 179.6,629.9 180.6,629.9 181.6,629.7 182.6,628.5 183.6,630.9 184.7,630.8 185.6,630.6 186.6,629.0 187.6,631.7 188.6,631.2 189.6,632.5 190.6,632.8 191.5,633.1 192.5,635.1 193.5,634.9 194.5,635.6 195.5,633.7 196.5,634.2 197.6,635.3 198.6,634.3 199.6,633.3 200.6,633.0 201.7,633.7 202.7,634.6 203.8,635.8 204.8,635.8 205.9,636.8 206.9,636.4 207.9,635.3 208.9,635.7 210.0,634.8 211.0,633.5 212.0,633.0 213.0,632.6 214.0,632.4 215.0,632.3 216.0,633.9 217.0,633.8 218.0,635.1 219.1,634.6 220.1,635.6 221.1,635.6 222.0,635.1 223.0,635.6 224.0,634.9 225.0,635.1 226.0,636.1 227.0,635.8 227.9,635.5 228.9,634.8 230.0,636.4 231.0,637.8 232.1,634.7 233.2,637.8 234.2,637.4 235.3,637.6 236.4,637.2 237.4,634.9 238.5,636.7 239.5,634.3 240.5,634.7 241.4,635.6 242.3,635.1 243.2,635.5 244.2,635.4" fill="none" stroke="#8ad2f6" stroke-width="1.3" stroke-linejoin="round" shape-rendering="crispEdges"/>
<rect x="321" y="461" width="169" height="190" fill="#404850"/>
<path d="M331.5 461 V653 M359.5 461 V653 M387.5 461 V653 M415.5 461 V653 M443.5 461 V653 M471.5 461 V653 M319 477.5 H490 M319 496.5 H490 M319 515.5 H490 M319 534.5 H490 M319 553.5 H490 M319 571.5 H490 M319 590.5 H490 M319 609.5 H490 M319 628.5 H490 M319 647.5 H490 M321.5 461 V651 M319 461.5 H490 M319 650.5 H490 M331.5 649 V652 M331.5 462 V463 M345.5 649 V652 M345.5 462 V463 M359.5 649 V652 M359.5 462 V463 M373.5 649 V652 M373.5 462 V463 M387.5 649 V652 M387.5 462 V463 M401.5 649 V652 M401.5 462 V463 M415.5 649 V652 M415.5 462 V463 M429.5 649 V652 M429.5 462 V463 M443.5 649 V652 M443.5 462 V463 M457.5 649 V652 M457.5 462 V463 M471.5 649 V652 M471.5 462 V463 M485.5 649 V652 M485.5 462 V463 M320 462.5 H321 M320 466.5 H321 M320 469.5 H321 M320 473.5 H321 M320 477.5 H321 M320 481.5 H321 M320 485.5 H321 M320 488.5 H321 M320 492.5 H321 M320 496.5 H321 M320 500.5 H321 M320 503.5 H321 M320 507.5 H321 M320 511.5 H321 M320 515.5 H321 M320 519.5 H321 M320 522.5 H321 M320 526.5 H321 M320 530.5 H321 M320 534.5 H321 M320 537.5 H321 M320 541.5 H321 M320 545.5 H321 M320 549.5 H321 M320 553.5 H321 M320 556.5 H321 M320 560.5 H321 M320 564.5 H321 M320 568.5 H321 M320 571.5 H321 M320 575.5 H321 M320 579.5 H321 M320 583.5 H321 M320 587.5 H321 M320 590.5 H321 M320 594.5 H321 M320 598.5 H321 M320 602.5 H321 M320 605.5 H321 M320 609.5 H321 M320 613.5 H321 M320 617.5 H321 M320 621.5 H321 M320 624.5 H321 M320 628.5 H321 M320 632.5 H321 M320 636.5 H321 M320 639.5 H321 M320 643.5 H321 M320 647.5 H321 M489.5 461 V651 M488 462.5 H489 M488 466.5 H489 M488 469.5 H489 M488 473.5 H489 M488 477.5 H489 M488 481.5 H489 M488 485.5 H489 M488 488.5 H489 M488 492.5 H489 M488 496.5 H489 M488 500.5 H489 M488 503.5 H489 M488 507.5 H489 M488 511.5 H489 M488 515.5 H489 M488 519.5 H489 M488 522.5 H489 M488 526.5 H489 M488 530.5 H489 M488 534.5 H489 M488 537.5 H489 M488 541.5 H489 M488 545.5 H489 M488 549.5 H489 M488 553.5 H489 M488 556.5 H489 M488 560.5 H489 M488 564.5 H489 M488 568.5 H489 M488 571.5 H489 M488 575.5 H489 M488 579.5 H489 M488 583.5 H489 M488 587.5 H489 M488 590.5 H489 M488 594.5 H489 M488 598.5 H489 M488 602.5 H489 M488 605.5 H489 M488 609.5 H489 M488 613.5 H489 M488 617.5 H489 M488 621.5 H489 M488 624.5 H489 M488 628.5 H489 M488 632.5 H489 M488 636.5 H489 M488 639.5 H489 M488 643.5 H489 M488 647.5 H489" stroke="#000" stroke-width="1" fill="none" shape-rendering="crispEdges"/>
<polyline points="322.8,617.8 323.9,616.1 324.9,611.2 326.0,609.0 327.1,610.4 328.0,608.8 328.9,604.6 329.8,599.7 330.7,598.3 331.7,601.2 332.6,596.9 333.5,600.6 334.5,599.8 335.4,599.7 336.3,599.4 337.2,596.6 338.1,596.5 339.0,598.6 339.9,594.5 340.8,593.7 341.7,591.3 342.6,591.8 343.5,592.7 344.5,592.6 345.4,590.8 346.3,589.9 347.2,589.2 348.1,588.2 349.0,588.6 349.9,586.3 350.8,587.5 351.7,585.2 352.6,582.5 353.5,582.5 354.4,583.7 355.3,582.8 356.4,583.2 357.5,585.4 358.5,588.4 359.6,590.2 360.6,588.6 361.5,583.7 362.4,583.3 363.4,581.9 364.3,578.6 365.2,580.2 366.1,576.5 367.0,576.7 367.9,576.5 368.8,576.6 369.7,578.0 370.6,579.3 371.5,579.8 372.4,578.5 373.3,578.0 374.2,578.0 375.1,575.2 376.1,577.1 377.0,574.6 377.9,575.1 378.8,573.1 379.7,574.1 380.6,572.6 381.5,572.0 382.4,570.5 383.3,570.4 384.2,571.3 385.1,564.9 386.0,567.0 386.9,565.3 387.8,563.1 388.8,562.7 389.7,567.9 390.7,566.8 391.9,563.8 393.2,557.7 394.1,558.3 395.0,562.1 395.9,562.8 396.8,562.5 397.7,561.8 398.6,562.3 399.5,559.4 400.4,558.6 401.3,558.9 402.2,559.7 403.3,556.8 404.4,553.1 405.5,552.1 406.6,547.2 407.5,550.8 408.4,559.1 409.3,554.0 410.3,554.7 411.2,553.7 412.1,552.1 413.1,551.3 414.0,552.5 414.9,552.7 415.8,551.5 416.7,552.8 417.8,552.8 418.8,549.9 419.9,546.2 421.0,544.9 422.0,543.2 422.9,542.5 423.8,543.4 424.8,546.3 425.7,542.9 426.6,542.1 427.5,546.0 428.4,546.3 429.3,549.6 430.2,549.8 431.1,547.0 432.0,547.2 432.9,545.2 433.8,547.8 434.7,544.5 435.6,544.3 436.5,546.4 437.4,540.3 438.3,540.5 439.3,538.9 440.2,538.3 441.1,537.6 442.0,538.4 442.9,536.2 443.8,535.6 444.7,533.4 445.6,536.2 446.5,534.2 447.4,538.3 448.3,534.7 449.2,534.4 450.1,530.4 451.0,529.7 451.9,527.7 452.8,526.5 453.7,524.2 454.6,522.1 455.5,521.0 456.4,519.2 457.3,517.5 458.2,515.6 459.1,515.3 460.0,520.2 460.9,516.3 461.8,515.8 462.7,518.9 463.6,517.8 464.5,515.7 465.4,516.0 466.3,515.5 467.2,510.0 468.1,513.4 469.0,512.1 469.9,513.0 470.9,510.5 471.8,511.3 472.7,508.2 473.6,500.3 474.5,503.5 475.4,501.2 476.3,494.8 477.2,496.8 478.1,495.6 479.1,495.6 480.0,493.6 481.0,495.3 481.9,496.3 482.8,496.0 483.7,496.9 484.6,497.9 484.9,498.1 485.7,499.3 486.1,518.5 486.6,540.2 488.6,541.4" fill="none" stroke="#12b8f8" stroke-width="1.4" stroke-linejoin="round" shape-rendering="crispEdges"/>
<rect x="550" y="503" width="170" height="148" fill="#404850"/>
<path d="M561.5 503 V653 M589.5 503 V653 M617.5 503 V653 M645.5 503 V653 M673.5 503 V653 M701.5 503 V653 M548 527.5 H720 M548 552.5 H720 M548 576.5 H720 M548 601.5 H720 M548 625.5 H720 M550.5 503 V651 M548 503.5 H720 M548 650.5 H720 M561.5 649 V652 M561.5 504 V505 M575.5 649 V652 M575.5 504 V505 M589.5 649 V652 M589.5 504 V505 M603.5 649 V652 M603.5 504 V505 M617.5 649 V652 M617.5 504 V505 M631.5 649 V652 M631.5 504 V505 M645.5 649 V652 M645.5 504 V505 M659.5 649 V652 M659.5 504 V505 M673.5 649 V652 M673.5 504 V505 M687.5 649 V652 M687.5 504 V505 M701.5 649 V652 M701.5 504 V505 M715.5 649 V652 M715.5 504 V505 M551 503.5 H552 M551 509.5 H552 M551 515.5 H552 M551 521.5 H552 M551 527.5 H552 M551 534.5 H552 M551 540.5 H552 M551 546.5 H552 M551 552.5 H552 M551 558.5 H552 M551 564.5 H552 M551 570.5 H552 M551 576.5 H552 M551 582.5 H552 M551 589.5 H552 M551 595.5 H552 M551 601.5 H552 M551 607.5 H552 M551 613.5 H552 M551 619.5 H552 M551 625.5 H552 M551 631.5 H552 M551 637.5 H552 M551 644.5 H552 M719.5 503 V651 M718 503.5 H719 M718 509.5 H719 M718 515.5 H719 M718 521.5 H719 M718 527.5 H719 M718 534.5 H719 M718 540.5 H719 M718 546.5 H719 M718 552.5 H719 M718 558.5 H719 M718 564.5 H719 M718 570.5 H719 M718 576.5 H719 M718 582.5 H719 M718 589.5 H719 M718 595.5 H719 M718 601.5 H719 M718 607.5 H719 M718 613.5 H719 M718 619.5 H719 M718 625.5 H719 M718 631.5 H719 M718 637.5 H719 M718 644.5 H719" stroke="#000" stroke-width="1" fill="none" shape-rendering="crispEdges"/>
<path d="M721.5 503 V651 M721 503.5 H724 M721 515.5 H724 M721 527.5 H724 M721 540.5 H724 M721 552.5 H724 M721 564.5 H724 M721 576.5 H724 M721 589.5 H724 M721 601.5 H724 M721 613.5 H724 M721 625.5 H724 M721 637.5 H724 M721 650.5 H724" stroke="#000" stroke-width="1" fill="none" shape-rendering="crispEdges"/>
<polyline points="550.8,559.3 553.3,564.3 555.1,572.7 558.8,569.0 561.3,577.3 563.4,572.7 564.9,581.7 566.0,504.0 566.7,643.1 567.8,581.7 569.6,554.6 572.1,569.0 574.3,563.6 576.4,504.0 577.5,643.1 578.6,581.7 581.1,552.8 584.0,547.4 586.6,552.8 589.5,548.5 594.9,551.0 598.5,556.4 602.1,552.1 605.7,549.2 609.3,554.6 612.9,556.4 614.7,632.2 615.5,507.6 616.9,523.9 617.6,552.8 622.0,554.6 627.4,550.3 632.8,549.2 636.4,546.3 640.0,551.0 647.2,549.2 654.5,554.6 658.1,551.0 665.3,552.1 672.5,549.2 679.7,548.5 687.0,551.0 690.6,553.5 696.0,548.5 705.0,549.2 712.2,548.5 718.7,547.7" fill="none" stroke="#cc2226" stroke-width="1.2" stroke-linejoin="round" shape-rendering="crispEdges"/>
<polyline points="550.8,596.1 553.3,579.9 555.1,579.9 557.7,603.3 560.6,614.2 563.1,592.5 564.9,594.3 567.8,603.3 569.6,607.0 572.1,573.7 574.3,574.5 576.8,588.9 579.3,596.1 581.1,603.3 583.3,585.3 585.8,571.6 588.0,572.7 591.3,585.3 593.8,590.7 596.7,581.7 600.3,585.3 603.2,587.1 607.5,587.1 610.4,558.2 612.9,558.2 614.7,574.5 616.5,581.7 618.3,574.5 621.2,572.7 624.8,583.5 628.5,590.7 632.8,583.5 636.4,587.1 639.3,573.7 641.8,574.5 644.3,588.9 646.5,585.3 650.8,592.5 653.4,602.6 654.5,586.0 656.3,586.0 658.1,599.7 661.7,601.5 665.3,607.0 668.9,605.2 672.5,610.6 676.1,616.0 681.5,617.8 687.0,618.5 694.2,619.6 699.6,623.2 703.2,625.0 706.8,617.8 710.4,616.0 713.0,621.4 715.9,623.2 718.7,625.7" fill="none" stroke="#12b8f8" stroke-width="1.4" stroke-linejoin="round" shape-rendering="crispEdges"/>
<polyline points="550.8,626.8 553.3,632.2 556.9,637.7 560.6,635.9 564.2,627.9 566.7,626.8 569.6,634.0 573.2,637.7 576.8,635.9 580.4,626.8 584.0,620.7 587.6,623.2 591.3,626.8 594.9,619.6 598.5,616.0 602.1,619.6 605.7,616.0 608.2,609.8 611.1,614.2 614.0,621.4 617.6,616.0 620.1,612.4 622.7,617.8 625.6,616.0 631.0,614.2 634.6,616.0 638.2,617.8 641.8,616.0 645.4,612.4 649.0,617.8 652.7,616.0 656.3,619.6 661.7,621.4 665.3,625.0 668.9,630.4 672.5,627.9 677.9,626.8 683.3,631.5 687.0,633.0 690.6,631.5 694.2,634.0 697.8,632.2 701.4,636.6 706.8,631.2 710.4,635.9 714.0,639.5 716.6,638.7 718.7,643.8" fill="none" stroke="#8ad2f6" stroke-width="1.4" stroke-linejoin="round" shape-rendering="crispEdges"/>
</svg>
<span class="t" id="t0" style="top:11.84px;font-size:13.33px;color:#000;left:31.30px;transform:scaleX(0.8611);">Weather Station Data Logger Version 4.7.0.0</span>
<span class="t" id="t1" style="top:35.84px;font-size:13.33px;color:#000;left:24.20px;transform:scaleX(0.8657);">File</span>
<span class="t" id="t2" style="top:35.84px;font-size:13.33px;color:#000;left:63.30px;transform:scaleX(0.8968);">View</span>
<span class="t" id="t3" style="top:35.84px;font-size:13.33px;color:#000;left:109.50px;transform:scaleX(0.8719);">Graph</span>
<span class="t" id="t4" style="top:35.84px;font-size:13.33px;color:#000;left:162.50px;transform:scaleX(0.9028);">Tools</span>
<span class="t" id="t5" style="top:35.84px;font-size:13.33px;color:#000;left:211.00px;transform:scaleX(0.9183);">Arduino</span>
<span class="t" id="t6" style="top:35.84px;font-size:13.33px;color:#000;left:274.30px;transform:scaleX(0.8825);">Help</span>
<span class="t" id="t7" style="top:67.84px;font-size:13.33px;color:#f4f8ff;left:36.40px;transform:scaleX(0.9890);">Temperatures</span>
<span class="t" id="t8" style="top:89.84px;font-size:13.33px;color:#f4f8ff;left:38.20px;transform:scaleX(0.8585);">CWOP</span>
<span class="t" id="t9" style="top:89.84px;font-size:13.33px;color:#f4f8ff;left:95.15px;transform:scaleX(0.9742);">Ceiling</span>
<span class="t" id="t10" style="top:112.84px;font-size:13.33px;color:#00ff00;left:35.50px;letter-spacing:0.078px;">54.7˚F</span>
<span class="t" id="t11" style="top:112.84px;font-size:13.33px;color:#00ff00;left:95.00px;letter-spacing:0.078px;">68.4˚F</span>
<span class="t" id="t12" style="top:136.84px;font-size:13.33px;color:#00ff00;left:35.50px;letter-spacing:0.078px;">53.4˚F</span>
<span class="t" id="t13" style="top:136.84px;font-size:13.33px;color:#00ff00;left:95.00px;letter-spacing:0.078px;">49.0˚F</span>
<span class="t" id="t14" style="top:161.75px;font-size:12.5px;color:#00ff00;left:44.15px;transform:scaleX(0.8669);">95%</span>
<span class="t" id="t15" style="top:161.75px;font-size:12.5px;color:#00ff00;left:104.15px;transform:scaleX(0.8669);">50%</span>
<span class="t" id="t16" style="top:67.84px;font-size:13.33px;color:#f4f8ff;left:163.80px;transform:scaleX(0.9739);">15-min Rates</span>
<span class="t" id="t17" style="top:89.84px;font-size:13.33px;color:#f4f8ff;left:166.20px;transform:scaleX(0.8585);">CWOP</span>
<span class="t" id="t18" style="top:89.84px;font-size:13.33px;color:#f4f8ff;left:223.55px;transform:scaleX(0.9742);">Ceiling</span>
<span class="t" id="t19" style="top:113.84px;font-size:13.33px;color:#00ff00;left:171.80px;transform:scaleX(0.9556);">0.18</span>
<span class="t" id="t20" style="top:113.84px;font-size:13.33px;color:#00ff00;left:229.40px;transform:scaleX(0.9608);">-4.49</span>
<span class="t" id="t21" style="top:137.84px;font-size:13.33px;color:#00ff00;left:171.80px;transform:scaleX(0.9556);">0.56</span>
<span class="t" id="t22" style="top:137.84px;font-size:13.33px;color:#00ff00;left:229.40px;transform:scaleX(0.9608);">-8.42</span>
<span class="t" id="t23" style="top:161.84px;font-size:13.33px;color:#f4f8ff;left:199.40px;letter-spacing:0.612px;">˚F/hr</span>
<span class="t" id="t24" style="top:67.84px;font-size:13.33px;color:#f4f8ff;left:291.50px;transform:scaleX(0.9762);">Anemometer</span>
<span class="t" id="t25" style="top:85.75px;font-size:12.5px;color:#00ff00;left:306.25px;letter-spacing:0.273px;">245º 1.4-Avg 0.0KT</span>
<span class="t" id="t26" style="top:106.84px;font-size:13.33px;color:#f4f8ff;left:302.40px;transform:scaleX(0.9973);">not quite a METAR...</span>
<span class="t" id="t27" style="top:126.00px;font-size:12px;color:#00ff00;left:300.30px;transform:scaleX(0.9274);">248º 0.9G1.4KT 000V000</span>
<span class="t" id="t28" style="top:144.84px;font-size:13.33px;color:#f4f8ff;left:323.50px;transform:scaleX(0.9609);">1Hr Peak Gust</span>
<span class="t" id="t29" style="top:163.75px;font-size:12.5px;color:#00ff00;left:300.95px;letter-spacing:0.162px;">245º 2.7KT  10:30 PM</span>
<span class="t" id="t30" style="top:67.84px;font-size:13.33px;color:#f4f8ff;left:464.20px;transform:scaleX(0.9835);height:12.16px;overflow:hidden;">Barometer inHg</span>
<span class="t" id="t31" style="top:82.84px;font-size:13.33px;color:#f4f8ff;left:475.85px;transform:scaleX(0.8137);">QFE</span>
<span class="t" id="t32" style="top:82.84px;font-size:13.33px;color:#f4f8ff;left:531.75px;transform:scaleX(0.8540);">QNH</span>
<span class="t" id="t33" style="top:97.84px;font-size:13.33px;color:#00ff00;left:470.50px;transform:scaleX(0.9593);">28.83</span>
<span class="t" id="t34" style="top:97.84px;font-size:13.33px;color:#00ff00;left:527.30px;transform:scaleX(0.9712);">29.87</span>
<span class="t" id="t35" style="top:115.85px;font-size:12.3px;color:#f4f8ff;left:462.50px;transform:scaleX(0.9549);">3Hr Rate</span>
<span class="t" id="t36" style="top:115.84px;font-size:13.33px;color:#00ff00;left:527.30px;transform:scaleX(0.9712);">0.008</span>
<span class="t" id="t37" style="top:134.84px;font-size:13.33px;color:#f4f8ff;left:464.20px;transform:scaleX(0.9229);">UV Index</span>
<span class="t" id="t38" style="top:156.75px;font-size:12.5px;color:#00ff00;left:468.12px;">0</span>
<span class="t" id="t39" style="top:158.00px;font-size:12px;color:#000;left:520.40px;transform:scaleX(0.8485);">LOW</span>
<span class="t" id="t40" style="top:67.84px;font-size:13.33px;color:#f4f8ff;left:591.30px;letter-spacing:0.134px;">Precipitation  in</span>
<span class="t" id="t41" style="top:87.84px;font-size:13.33px;color:#f4f8ff;left:589.30px;letter-spacing:0.212px;">Rate/hr</span>
<span class="t" id="t42" style="top:87.84px;font-size:13.33px;color:#00ff00;left:675.60px;transform:scaleX(0.9556);">0.00</span>
<span class="t" id="t43" style="top:107.84px;font-size:13.33px;color:#f4f8ff;left:589.60px;transform:scaleX(0.9662);">This Hr</span>
<span class="t" id="t44" style="top:107.84px;font-size:13.33px;color:#00ff00;left:675.60px;transform:scaleX(0.9556);">0.00</span>
<span class="t" id="t45" style="top:127.84px;font-size:13.33px;color:#f4f8ff;left:589.60px;transform:scaleX(0.9416);">Today</span>
<span class="t" id="t46" style="top:127.84px;font-size:13.33px;color:#00ff00;left:675.60px;transform:scaleX(0.9556);">0.00</span>
<span class="t" id="t47" style="top:147.84px;font-size:13.33px;color:#f4f8ff;left:589.60px;transform:scaleX(0.9057);">Since</span>
<span class="t" id="t48" style="top:147.84px;font-size:13.33px;color:#00ff00;left:675.60px;transform:scaleX(0.9170);">0.01</span>
<span class="t" id="t49" style="top:167.40px;font-size:11.2px;color:#00ff00;left:595.40px;letter-spacing:0.086px;">12:00 AM  6/1/2014</span>
<span class="t" id="t50" style="top:67.84px;font-size:13.33px;color:#f4f8ff;left:726.30px;letter-spacing:0.148px;">Counters / Timers</span>
<span class="t" id="t51" style="top:84.85px;font-size:12.3px;color:#f4f8ff;left:722.00px;transform:scaleX(0.9979);">Arduino</span>
<span class="t" id="t52" style="top:84.85px;font-size:12.3px;color:#f4f8ff;left:785.00px;transform:scaleX(0.8280);">281</span>
<span class="t" id="t53" style="top:191.84px;font-size:13.33px;color:#f4f8ff;left:772.30px;transform:scaleX(0.9767);">Station Clock</span>
<span class="t" id="t54" style="top:210.75px;font-size:12.5px;color:#00ff00;left:793.70px;letter-spacing:0.128px;">11:15 PM</span>
<span class="t" id="t55" style="top:228.75px;font-size:12.5px;color:#00ff00;left:794.00px;transform:scaleX(1.1300);">9/5/2014</span>
<span class="t" id="t56" style="top:268.83px;font-size:13.33px;color:#f4f8ff;left:772.50px;transform:scaleX(0.9831);">Battery Status</span>
<span class="t" id="t57" style="top:314.83px;font-size:13.33px;color:#f4f8ff;left:772.20px;transform:scaleX(0.9749);">Anemometer</span>
<span class="t" id="t58" style="top:337.83px;font-size:13.33px;color:#f4f8ff;left:778.10px;transform:scaleX(0.9530);">Rain Bucket</span>
<span class="t" id="t59" style="top:360.83px;font-size:13.33px;color:#f4f8ff;left:767.20px;transform:scaleX(0.9484);">Extra Sensors</span>
<span class="t" id="t60" style="top:386.75px;font-size:14.5px;color:#f4f8ff;left:772.60px;transform:scaleX(0.9429);">Graph Type</span>
<span class="t" id="t61" style="top:409.00px;font-size:14px;color:#f4f8ff;left:786.60px;transform:scaleX(0.9746);">Temperature</span>
<span class="t" id="t62" style="top:432.00px;font-size:14px;color:#f4f8ff;left:785.70px;transform:scaleX(0.9608);">Barometer</span>
<span class="t" id="t63" style="top:455.00px;font-size:14px;color:#f4f8ff;left:785.70px;transform:scaleX(0.9556);">Anemometer</span>
<span class="t" id="t64" style="top:478.00px;font-size:14px;color:#f4f8ff;left:785.70px;transform:scaleX(0.9540);">Precipitation</span>
<span class="t" id="t65" style="top:501.00px;font-size:14px;color:#f4f8ff;left:785.70px;transform:scaleX(0.9613);">UV</span>
<span class="t" id="t66" style="top:523.75px;font-size:14.5px;color:#f4f8ff;left:773.00px;transform:scaleX(0.8851);">Graph Length</span>
<span class="t" id="t67" style="top:549.00px;font-size:14px;color:#f4f8ff;left:781.20px;transform:scaleX(0.8629);">0.5</span>
<span class="t" id="t68" style="top:545.00px;font-size:14px;color:#f4f8ff;left:832.40px;transform:scaleX(0.9872);">days</span>
<span class="t" id="t69" style="top:604.84px;font-size:13.33px;color:#f4f8ff;left:772.50px;transform:scaleX(0.8955);">Data Color Legend</span>
<span class="t" id="t70" style="top:622.84px;font-size:13.33px;color:#00ff00;left:772.50px;transform:scaleX(0.7994);">OK</span>
<span class="t" id="t71" style="top:622.84px;font-size:13.33px;color:#ffe600;left:804.30px;transform:scaleX(0.9503);">Aging</span>
<span class="t" id="t72" style="top:622.84px;font-size:13.33px;color:#c0202c;left:853.60px;transform:scaleX(0.8675);">Old</span>
<span class="t" id="t73" style="top:194.84px;font-size:13.33px;color:#f4f8ff;left:39.50px;transform:scaleX(0.9604);">Temperature ˚F</span>
<span class="t" id="t74" style="top:220.50px;font-size:10px;color:#c0202c;left:71.00px;transform:scaleX(0.9639);">Freezer Tmp</span>
<span class="t" id="t75" style="top:220.50px;font-size:10px;color:#a07a58;left:140.00px;transform:scaleX(0.9774);">Fridge Tmp</span>
<span class="t" id="t76" style="top:232.50px;font-size:10px;color:#ffb018;left:71.00px;transform:scaleX(0.9820);">Fridge2 Tmp</span>
<span class="t" id="t77" style="top:243.50px;font-size:10px;color:#0a0a14;left:46.44px;-webkit-text-stroke:0.25px #0a0a14;">40</span>
<span class="t" id="t78" style="top:275.50px;font-size:10px;color:#0a0a14;left:46.44px;-webkit-text-stroke:0.25px #0a0a14;">30</span>
<span class="t" id="t79" style="top:307.50px;font-size:10px;color:#0a0a14;left:46.44px;-webkit-text-stroke:0.25px #0a0a14;">20</span>
<span class="t" id="t80" style="top:339.50px;font-size:10px;color:#0a0a14;left:46.44px;-webkit-text-stroke:0.25px #0a0a14;">10</span>
<span class="t" id="t81" style="top:370.50px;font-size:10px;color:#0a0a14;left:49.22px;-webkit-text-stroke:0.25px #0a0a14;">0</span>
<span class="t" id="t82" style="top:402.50px;font-size:10px;color:#0a0a14;left:45.07px;-webkit-text-stroke:0.25px #0a0a14;">-10</span>
<span class="t" id="t83" style="top:414.50px;font-size:10px;color:#0a0a14;left:66.00px;letter-spacing:0.034px;-webkit-text-stroke:0.25px #0a0a14;">12:00</span>
<span class="t" id="t84" style="top:414.50px;font-size:10px;color:#0a0a14;left:95.90px;letter-spacing:0.034px;-webkit-text-stroke:0.25px #0a0a14;">14:00</span>
<span class="t" id="t85" style="top:414.50px;font-size:10px;color:#0a0a14;left:125.80px;letter-spacing:0.034px;-webkit-text-stroke:0.25px #0a0a14;">16:00</span>
<span class="t" id="t86" style="top:414.50px;font-size:10px;color:#0a0a14;left:155.70px;letter-spacing:0.034px;-webkit-text-stroke:0.25px #0a0a14;">18:00</span>
<span class="t" id="t87" style="top:414.50px;font-size:10px;color:#0a0a14;left:185.60px;letter-spacing:0.034px;-webkit-text-stroke:0.25px #0a0a14;">20:00</span>
<span class="t" id="t88" style="top:414.50px;font-size:10px;color:#0a0a14;left:215.50px;letter-spacing:0.034px;-webkit-text-stroke:0.25px #0a0a14;">22:00</span>
<span class="t" id="t89" style="top:194.84px;font-size:13.33px;color:#f4f8ff;left:283.50px;transform:scaleX(0.8935);">QFE Barometer  inHg</span>
<span class="t" id="t90" style="top:213.50px;font-size:10px;color:#0a0a14;left:286.05px;letter-spacing:0.294px;-webkit-text-stroke:0.25px #0a0a14;">28.88</span>
<span class="t" id="t91" style="top:232.50px;font-size:10px;color:#0a0a14;left:286.05px;letter-spacing:0.294px;-webkit-text-stroke:0.25px #0a0a14;">28.87</span>
<span class="t" id="t92" style="top:251.50px;font-size:10px;color:#0a0a14;left:286.05px;letter-spacing:0.294px;-webkit-text-stroke:0.25px #0a0a14;">28.86</span>
<span class="t" id="t93" style="top:270.50px;font-size:10px;color:#0a0a14;left:286.05px;letter-spacing:0.294px;-webkit-text-stroke:0.25px #0a0a14;">28.85</span>
<span class="t" id="t94" style="top:289.50px;font-size:10px;color:#0a0a14;left:286.05px;letter-spacing:0.294px;-webkit-text-stroke:0.25px #0a0a14;">28.84</span>
<span class="t" id="t95" style="top:308.50px;font-size:10px;color:#0a0a14;left:286.05px;letter-spacing:0.294px;-webkit-text-stroke:0.25px #0a0a14;">28.83</span>
<span class="t" id="t96" style="top:327.50px;font-size:10px;color:#0a0a14;left:286.05px;letter-spacing:0.294px;-webkit-text-stroke:0.25px #0a0a14;">28.82</span>
<span class="t" id="t97" style="top:346.50px;font-size:10px;color:#0a0a14;left:286.05px;letter-spacing:0.294px;-webkit-text-stroke:0.25px #0a0a14;">28.81</span>
<span class="t" id="t98" style="top:365.50px;font-size:10px;color:#0a0a14;left:286.05px;letter-spacing:0.294px;-webkit-text-stroke:0.25px #0a0a14;">28.80</span>
<span class="t" id="t99" style="top:383.50px;font-size:10px;color:#0a0a14;left:286.05px;letter-spacing:0.294px;-webkit-text-stroke:0.25px #0a0a14;">28.79</span>
<span class="t" id="t100" style="top:413.50px;font-size:10px;color:#0a0a14;left:319.20px;letter-spacing:0.034px;-webkit-text-stroke:0.25px #0a0a14;">12:00</span>
<span class="t" id="t101" style="top:413.50px;font-size:10px;color:#0a0a14;left:375.20px;letter-spacing:0.034px;-webkit-text-stroke:0.25px #0a0a14;">16:00</span>
<span class="t" id="t102" style="top:413.50px;font-size:10px;color:#0a0a14;left:431.20px;letter-spacing:0.034px;-webkit-text-stroke:0.25px #0a0a14;">20:00</span>
<span class="t" id="t103" style="top:194.84px;font-size:13.33px;color:#f4f8ff;left:527.80px;transform:scaleX(0.9607);">Temperature, Dew Point ˚F</span>
<span class="t" id="t104" style="top:219.50px;font-size:10px;color:#cc2226;left:555.40px;transform:scaleX(0.9892);">Ceiling Tmp</span>
<span class="t" id="t105" style="top:219.50px;font-size:10px;color:#88c4f0;left:620.40px;transform:scaleX(0.9439);">Ceiling DP</span>
<span class="t" id="t106" style="top:231.50px;font-size:10px;color:#8a7866;left:555.40px;transform:scaleX(0.9025);">SN127 Tmp</span>
<span class="t" id="t107" style="top:231.50px;font-size:10px;color:#5e8a78;left:620.40px;transform:scaleX(0.8466);">SN127 DP</span>
<span class="t" id="t108" style="top:243.50px;font-size:10px;color:#ffa408;left:555.40px;transform:scaleX(0.9544);">Bad RH Tmp</span>
<span class="t" id="t109" style="top:243.50px;font-size:10px;color:#28cc30;left:620.40px;transform:scaleX(0.8900);">Bad RH DP</span>
<span class="t" id="t110" style="top:254.50px;font-size:10px;color:#0a0a14;left:531.24px;-webkit-text-stroke:0.25px #0a0a14;">80</span>
<span class="t" id="t111" style="top:275.50px;font-size:10px;color:#0a0a14;left:531.24px;-webkit-text-stroke:0.25px #0a0a14;">75</span>
<span class="t" id="t112" style="top:296.50px;font-size:10px;color:#0a0a14;left:531.24px;-webkit-text-stroke:0.25px #0a0a14;">70</span>
<span class="t" id="t113" style="top:317.50px;font-size:10px;color:#0a0a14;left:531.24px;-webkit-text-stroke:0.25px #0a0a14;">65</span>
<span class="t" id="t114" style="top:338.50px;font-size:10px;color:#0a0a14;left:531.24px;-webkit-text-stroke:0.25px #0a0a14;">60</span>
<span class="t" id="t115" style="top:359.50px;font-size:10px;color:#0a0a14;left:531.24px;-webkit-text-stroke:0.25px #0a0a14;">55</span>
<span class="t" id="t116" style="top:380.50px;font-size:10px;color:#0a0a14;left:531.24px;-webkit-text-stroke:0.25px #0a0a14;">50</span>
<span class="t" id="t117" style="top:401.50px;font-size:10px;color:#0a0a14;left:531.24px;-webkit-text-stroke:0.25px #0a0a14;">45</span>
<span class="t" id="t118" style="top:413.50px;font-size:10px;color:#0a0a14;left:550.10px;letter-spacing:0.034px;-webkit-text-stroke:0.25px #0a0a14;">12:00</span>
<span class="t" id="t119" style="top:413.50px;font-size:10px;color:#0a0a14;left:580.43px;letter-spacing:0.034px;-webkit-text-stroke:0.25px #0a0a14;">14:00</span>
<span class="t" id="t120" style="top:413.50px;font-size:10px;color:#0a0a14;left:610.76px;letter-spacing:0.034px;-webkit-text-stroke:0.25px #0a0a14;">16:00</span>
<span class="t" id="t121" style="top:413.50px;font-size:10px;color:#0a0a14;left:641.09px;letter-spacing:0.034px;-webkit-text-stroke:0.25px #0a0a14;">18:00</span>
<span class="t" id="t122" style="top:413.50px;font-size:10px;color:#0a0a14;left:671.42px;letter-spacing:0.034px;-webkit-text-stroke:0.25px #0a0a14;">20:00</span>
<span class="t" id="t123" style="top:413.50px;font-size:10px;color:#0a0a14;left:701.75px;letter-spacing:0.034px;-webkit-text-stroke:0.25px #0a0a14;">22:00</span>
<span class="t" id="t124" style="top:438.83px;font-size:13.33px;color:#f4f8ff;left:40.20px;transform:scaleX(0.9607);">Temperature, Dew Point ˚F</span>
<span class="t" id="t125" style="top:463.50px;font-size:10px;color:#cc2226;left:67.00px;transform:scaleX(0.9378);">CWOP Tmp</span>
<span class="t" id="t126" style="top:463.50px;font-size:10px;color:#88c4f0;left:127.20px;transform:scaleX(0.8864);">CWOP DP</span>
<span class="t" id="t127" style="top:475.50px;font-size:10px;color:#0a0a14;left:43.04px;-webkit-text-stroke:0.25px #0a0a14;">68</span>
<span class="t" id="t128" style="top:496.50px;font-size:10px;color:#0a0a14;left:43.04px;-webkit-text-stroke:0.25px #0a0a14;">66</span>
<span class="t" id="t129" style="top:517.50px;font-size:10px;color:#0a0a14;left:43.04px;-webkit-text-stroke:0.25px #0a0a14;">64</span>
<span class="t" id="t130" style="top:539.50px;font-size:10px;color:#0a0a14;left:43.04px;-webkit-text-stroke:0.25px #0a0a14;">62</span>
<span class="t" id="t131" style="top:560.50px;font-size:10px;color:#0a0a14;left:43.04px;-webkit-text-stroke:0.25px #0a0a14;">60</span>
<span class="t" id="t132" style="top:581.50px;font-size:10px;color:#0a0a14;left:43.04px;-webkit-text-stroke:0.25px #0a0a14;">58</span>
<span class="t" id="t133" style="top:603.50px;font-size:10px;color:#0a0a14;left:43.04px;-webkit-text-stroke:0.25px #0a0a14;">56</span>
<span class="t" id="t134" style="top:624.50px;font-size:10px;color:#0a0a14;left:43.04px;-webkit-text-stroke:0.25px #0a0a14;">54</span>
<span class="t" id="t135" style="top:645.50px;font-size:10px;color:#0a0a14;left:43.04px;-webkit-text-stroke:0.25px #0a0a14;">52</span>
<span class="t" id="t136" style="top:657.50px;font-size:10px;color:#0a0a14;left:62.20px;letter-spacing:0.034px;-webkit-text-stroke:0.25px #0a0a14;">12:00</span>
<span class="t" id="t137" style="top:657.50px;font-size:10px;color:#0a0a14;left:92.53px;letter-spacing:0.034px;-webkit-text-stroke:0.25px #0a0a14;">14:00</span>
<span class="t" id="t138" style="top:657.50px;font-size:10px;color:#0a0a14;left:122.86px;letter-spacing:0.034px;-webkit-text-stroke:0.25px #0a0a14;">16:00</span>
<span class="t" id="t139" style="top:657.50px;font-size:10px;color:#0a0a14;left:153.19px;letter-spacing:0.034px;-webkit-text-stroke:0.25px #0a0a14;">18:00</span>
<span class="t" id="t140" style="top:657.50px;font-size:10px;color:#0a0a14;left:183.52px;letter-spacing:0.034px;-webkit-text-stroke:0.25px #0a0a14;">20:00</span>
<span class="t" id="t141" style="top:657.50px;font-size:10px;color:#0a0a14;left:213.85px;letter-spacing:0.034px;-webkit-text-stroke:0.25px #0a0a14;">22:00</span>
<span class="t" id="t142" style="top:438.83px;font-size:13.33px;color:#f4f8ff;left:283.50px;transform:scaleX(0.9090);">QNH Barometer  inHg</span>
<span class="t" id="t143" style="top:473.50px;font-size:10px;color:#0a0a14;left:286.05px;letter-spacing:0.294px;-webkit-text-stroke:0.25px #0a0a14;">29.91</span>
<span class="t" id="t144" style="top:491.50px;font-size:10px;color:#0a0a14;left:286.05px;letter-spacing:0.294px;-webkit-text-stroke:0.25px #0a0a14;">29.90</span>
<span class="t" id="t145" style="top:510.50px;font-size:10px;color:#0a0a14;left:286.05px;letter-spacing:0.294px;-webkit-text-stroke:0.25px #0a0a14;">29.89</span>
<span class="t" id="t146" style="top:529.50px;font-size:10px;color:#0a0a14;left:286.05px;letter-spacing:0.294px;-webkit-text-stroke:0.25px #0a0a14;">29.88</span>
<span class="t" id="t147" style="top:548.50px;font-size:10px;color:#0a0a14;left:286.05px;letter-spacing:0.294px;-webkit-text-stroke:0.25px #0a0a14;">29.87</span>
<span class="t" id="t148" style="top:567.50px;font-size:10px;color:#0a0a14;left:286.05px;letter-spacing:0.294px;-webkit-text-stroke:0.25px #0a0a14;">29.86</span>
<span class="t" id="t149" style="top:586.50px;font-size:10px;color:#0a0a14;left:286.05px;letter-spacing:0.294px;-webkit-text-stroke:0.25px #0a0a14;">29.85</span>
<span class="t" id="t150" style="top:605.50px;font-size:10px;color:#0a0a14;left:286.05px;letter-spacing:0.294px;-webkit-text-stroke:0.25px #0a0a14;">29.84</span>
<span class="t" id="t151" style="top:624.50px;font-size:10px;color:#0a0a14;left:286.05px;letter-spacing:0.294px;-webkit-text-stroke:0.25px #0a0a14;">29.83</span>
<span class="t" id="t152" style="top:643.50px;font-size:10px;color:#0a0a14;left:286.05px;letter-spacing:0.294px;-webkit-text-stroke:0.25px #0a0a14;">29.82</span>
<span class="t" id="t153" style="top:657.50px;font-size:10px;color:#0a0a14;left:319.20px;letter-spacing:0.034px;-webkit-text-stroke:0.25px #0a0a14;">12:00</span>
<span class="t" id="t154" style="top:657.50px;font-size:10px;color:#0a0a14;left:375.20px;letter-spacing:0.034px;-webkit-text-stroke:0.25px #0a0a14;">16:00</span>
<span class="t" id="t155" style="top:657.50px;font-size:10px;color:#0a0a14;left:431.20px;letter-spacing:0.034px;-webkit-text-stroke:0.25px #0a0a14;">20:00</span>
<span class="t" id="t156" style="top:438.83px;font-size:13.33px;color:#f4f8ff;left:527.60px;letter-spacing:-0.739px;">Anemometer  KT</span>
<span class="t" id="t157" style="top:463.50px;font-size:10px;color:#12b8f8;left:555.40px;transform:scaleX(0.9814);">10-minute Peak Gust Speed</span>
<span class="t" id="t158" style="top:475.50px;font-size:10px;color:#a4dcf8;left:555.40px;transform:scaleX(0.9249);">Average Speed</span>
<span class="t" id="t159" style="top:487.50px;font-size:10px;color:#cc2226;left:577.30px;letter-spacing:0.059px;">Direction</span>
<span class="t" id="t160" style="top:499.50px;font-size:10px;color:#0a0a14;left:530.94px;-webkit-text-stroke:0.25px #0a0a14;">12</span>
<span class="t" id="t161" style="top:523.50px;font-size:10px;color:#0a0a14;left:530.94px;-webkit-text-stroke:0.25px #0a0a14;">10</span>
<span class="t" id="t162" style="top:547.50px;font-size:10px;color:#0a0a14;left:533.72px;-webkit-text-stroke:0.25px #0a0a14;">8</span>
<span class="t" id="t163" style="top:572.50px;font-size:10px;color:#0a0a14;left:533.72px;-webkit-text-stroke:0.25px #0a0a14;">6</span>
<span class="t" id="t164" style="top:596.50px;font-size:10px;color:#0a0a14;left:533.72px;-webkit-text-stroke:0.25px #0a0a14;">4</span>
<span class="t" id="t165" style="top:621.50px;font-size:10px;color:#0a0a14;left:533.72px;-webkit-text-stroke:0.25px #0a0a14;">2</span>
<span class="t" id="t166" style="top:645.50px;font-size:10px;color:#0a0a14;left:533.72px;-webkit-text-stroke:0.25px #0a0a14;">0</span>
<span class="t" id="t167" style="top:499.50px;font-size:10px;color:#0a0a14;left:733.28px;-webkit-text-stroke:0.25px #0a0a14;">N</span>
<span class="t" id="t168" style="top:523.50px;font-size:10px;color:#0a0a14;left:728.56px;-webkit-text-stroke:0.25px #0a0a14;">300</span>
<span class="t" id="t169" style="top:547.50px;font-size:10px;color:#0a0a14;left:728.56px;-webkit-text-stroke:0.25px #0a0a14;">240</span>
<span class="t" id="t170" style="top:572.50px;font-size:10px;color:#0a0a14;left:733.56px;-webkit-text-stroke:0.25px #0a0a14;">S</span>
<span class="t" id="t171" style="top:596.50px;font-size:10px;color:#0a0a14;left:728.56px;-webkit-text-stroke:0.25px #0a0a14;">120</span>
<span class="t" id="t172" style="top:621.50px;font-size:10px;color:#0a0a14;left:731.34px;-webkit-text-stroke:0.25px #0a0a14;">60</span>
<span class="t" id="t173" style="top:645.50px;font-size:10px;color:#0a0a14;left:733.28px;-webkit-text-stroke:0.25px #0a0a14;">N</span>
<span class="t" id="t174" style="top:657.50px;font-size:10px;color:#0a0a14;left:549.20px;letter-spacing:0.034px;-webkit-text-stroke:0.25px #0a0a14;">12:00</span>
<span class="t" id="t175" style="top:657.50px;font-size:10px;color:#0a0a14;left:605.16px;letter-spacing:0.034px;-webkit-text-stroke:0.25px #0a0a14;">16:00</span>
<span class="t" id="t176" style="top:657.50px;font-size:10px;color:#0a0a14;left:661.12px;letter-spacing:0.034px;-webkit-text-stroke:0.25px #0a0a14;">20:00</span>
</body></html>
